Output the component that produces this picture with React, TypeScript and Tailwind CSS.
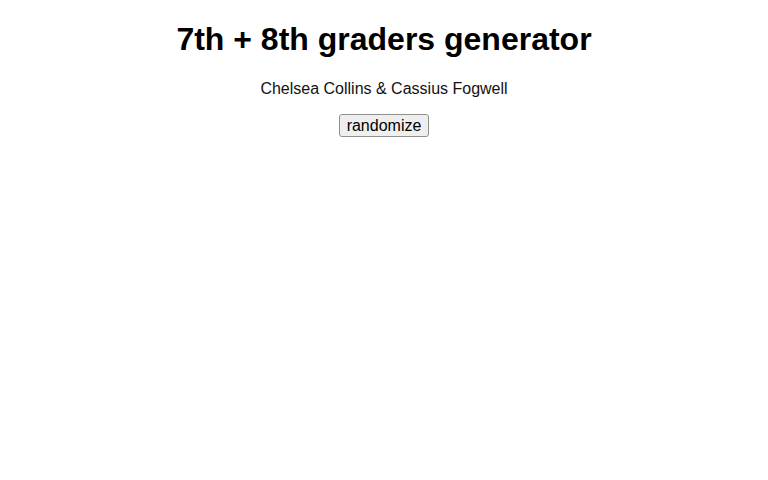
export default function App() {
  return (
    <div
      className="min-h-[480px] bg-white text-center text-[#111]"
      style={{ fontFamily: '"Liberation Sans", Arial, sans-serif' }}
    >
      <div className="pt-[21.44px]">
        <h1 className="text-[32px] font-bold leading-[normal] text-black">7th + 8th graders generator</h1>
        <p className="mt-[21.44px] text-base leading-[normal]">Chelsea Collins &amp; Cassius Fogwell</p>
        <div className="mt-4">
          <button className="rounded-[3px] border border-[#8f8f8f] bg-[#efefef] px-[7px] py-[1.5px] text-base leading-[normal] text-black">
            randomize
          </button>
        </div>
      </div>
    </div>
  );
}
